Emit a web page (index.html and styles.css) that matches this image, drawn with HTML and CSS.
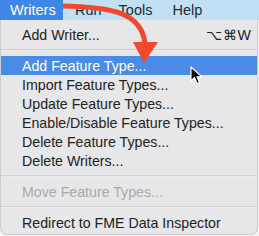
FILE: index.html
```html
<!DOCTYPE html>
<html>
<head>
<meta charset="utf-8">
<link rel="stylesheet" href="styles.css">
</head>
<body>
<div class="screen">
  <div class="menubar">
    <span class="mb-item active">Writers</span>
    <span class="mb-item run">Run</span>
    <span class="mb-item tools">Tools</span>
    <span class="mb-item help">Help</span>
  </div>
  <div class="menu">
    <div class="item"><span>Add Writer...</span><span class="key">⌥⌘W</span></div>
    <div class="sep"></div>
    <div class="item hl"><span>Add Feature Type...</span></div>
    <div class="item"><span>Import Feature Types...</span></div>
    <div class="item"><span>Update Feature Types...</span></div>
    <div class="item"><span>Enable/Disable Feature Types...</span></div>
    <div class="item"><span>Delete Feature Types...</span></div>
    <div class="item"><span>Delete Writers...</span></div>
    <div class="sep"></div>
    <div class="item dis"><span>Move Feature Types...</span></div>
    <div class="sep"></div>
    <div class="item"><span>Redirect to FME Data Inspector</span></div>
  </div>
  <svg class="arrow" width="259" height="80" viewBox="0 0 259 80">
    <path d="M63,6 C105,7 142,10 145,44" fill="none" stroke="#f2492e" stroke-width="5" stroke-linecap="butt"/>
    <polygon points="133,42 158,42 144,63" fill="#f2492e"/>
  </svg>
  <svg class="cursor" width="14" height="20" viewBox="0 0 14 20">
    <path d="M1,1 L1,15 L4.5,11.5 L7,17.5 L9.5,16.5 L7,10.8 L11.8,10.8 Z" fill="#000" stroke="#fff" stroke-width="1.2" stroke-linejoin="round"/>
  </svg>
</div>
</body>
</html>
```
FILE: styles.css
```css
html, body {
  margin: 0;
  padding: 0;
}
body {
  background: #f3f3f3;
  font-family: "Liberation Sans", Arial, sans-serif;
  -webkit-font-smoothing: antialiased;
}
.screen {
  position: relative;
  width: 259px;
  height: 236px;
  overflow: hidden;
}
.menubar {
  height: 20px;
  background: #c2e0f4;
  display: flex;
  align-items: stretch;
  font-size: 14.5px;
  color: #1d2b36;
}
.mb-item {
  display: flex;
  align-items: center;
}
.mb-item.active {
  background: #3f87e6;
  color: #fff;
  width: 53px;
  padding-left: 10px;
}
.mb-item.run {
  margin-left: 12px;
}
.mb-item.tools {
  margin-left: 17px;
}
.mb-item.help {
  margin-left: 20px;
}
.menu {
  width: 256px;
  background: #e7e7e9;
  border: 1px solid #cdcdcf;
  border-top: none;
  border-radius: 0 0 7px 7px;
  padding: 5px 0 2px;
  font-size: 14.2px;
  color: #222;
}
.item {
  height: 19px;
  display: flex;
  align-items: center;
  justify-content: space-between;
  padding: 0 5px 0 21px;
}
.item.hl {
  background: #4a8be7;
  color: #fff;
}
.item.dis {
  color: #a8a8aa;
}
.key {
  letter-spacing: 1px;
}
.sep {
  height: 1px;
  background: #d1d1d3;
  margin: 5px 0;
  border-bottom: 1px solid #ececee;
}
.arrow {
  position: absolute;
  left: 0;
  top: 0;
}
.cursor {
  position: absolute;
  left: 190px;
  top: 66px;
}
```
